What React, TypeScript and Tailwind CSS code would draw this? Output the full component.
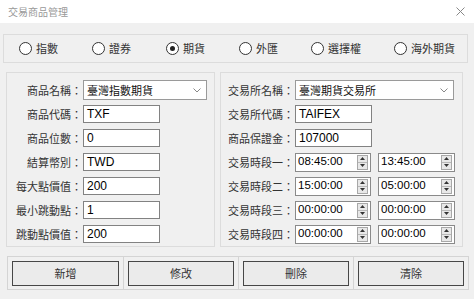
import React from 'react';

const CJK = '"Noto Sans CJK TC", "Noto Sans", sans-serif';
const LAT = '"Liberation Sans", "Noto Sans CJK TC", sans-serif';

const RADIOS = [
  { label: '指數', w: 'w-[73px]' },
  { label: '證券', w: 'w-[74px]' },
  { label: '期貨', w: 'w-[73px]', checked: true },
  { label: '外匯', w: 'w-[72px]' },
  { label: '選擇權', w: 'w-[83px]' },
  { label: '海外期貨', w: 'w-[70px]' },
];

const Radio: React.FC<{ label: string; checked?: boolean; w: string }> = ({ label, checked, w }) => (
  <div className={`flex items-center ${w}`}>
    <span className="w-[13px] h-[13px] rounded-full border border-[#333] bg-white flex items-center justify-center">
      {checked && <span className="w-[5px] h-[5px] rounded-full bg-[#222]" />}
    </span>
    <span className="ml-[4px] text-[11px] text-[#333]" style={{ fontFamily: CJK }}>
      {label}
    </span>
  </div>
);

const TextBox: React.FC<{ value: string; w: string }> = ({ value, w }) => (
  <div
    className={`${w} h-[18px] bg-white border border-[#828282] flex items-center pl-[3px] text-[12px] text-black`}
    style={{ fontFamily: LAT }}
  >
    {value}
  </div>
);

const Combo: React.FC<{ value: string; w: string }> = ({ value, w }) => (
  <div className={`${w} h-[20px] bg-white border border-[#9a9a9a] flex items-center justify-between pl-[3px] pr-[5px]`}>
    <span className="text-[11px] text-[#111]" style={{ fontFamily: CJK }}>
      {value}
    </span>
    <svg width="8" height="5" viewBox="0 0 8 5">
      <path d="M0.5 0.5 L4 4 L7.5 0.5" fill="none" stroke="#888" strokeWidth="1" />
    </svg>
  </div>
);

const Spin: React.FC<{ value: string; w: string }> = ({ value, w }) => (
  <div
    className={`${w} h-[19px] bg-white border border-[#8a8a8a] flex items-center justify-between pl-[2px] pr-[2px] text-[11.5px] text-black`}
    style={{ fontFamily: LAT }}
  >
    <span>{value}</span>
    <div className="w-[11px] h-[15px] flex flex-col border border-[#a8a8a8] bg-[#e8e8e8]">
      <div className="flex-1 flex items-center justify-center border-b border-[#b8b8b8]">
        <svg width="5" height="3" viewBox="0 0 5 3">
          <path d="M0 3 L2.5 0 L5 3 Z" fill="#333" />
        </svg>
      </div>
      <div className="flex-1 flex items-center justify-center">
        <svg width="5" height="3" viewBox="0 0 5 3">
          <path d="M0 0 L2.5 3 L5 0 Z" fill="#333" />
        </svg>
      </div>
    </div>
  </div>
);

const Row: React.FC<{ label: string; lw: string; children: React.ReactNode }> = ({ label, lw, children }) => (
  <div className="h-[24px] flex items-center">
    <span className={`${lw} text-right text-[11px] text-[#333] pr-[1px]`} style={{ fontFamily: CJK }}>
      {label}
    </span>
    <div className="flex items-center gap-[7px]">{children}</div>
  </div>
);

export default function App() {
  return (
    <div className="w-[474px] h-[299px] bg-[#f0f0f0] overflow-hidden relative" style={{ fontFamily: CJK }}>
      {/* 標題列 */}
      <div className="h-[23px] bg-white flex items-center justify-between pl-[8px] pr-[9px]">
        <span className="text-[10px] text-[#999]">交易商品管理</span>
        <svg width="9" height="9" viewBox="0 0 9 9">
          <path d="M0.5 0.5 L8.5 8.5 M8.5 0.5 L0.5 8.5" stroke="#888" strokeWidth="1" />
        </svg>
      </div>

      {/* 商品類別 */}
      <div className="mt-[11px] ml-[3px] w-[465px] h-[29px] border border-[#dcdcdc] flex items-center pl-[15px]">
        {RADIOS.map(r => (
          <Radio key={r.label} {...r} />
        ))}
      </div>

      {/* 商品資料 / 交易所資料 */}
      <div className="mt-[9px] ml-[6px] flex gap-[5px]">
        <div className="w-[209px] h-[175px] border border-[#dcdcdc] pt-[5px]">
          <Row label="商品名稱：" lw="w-[76px]">
            <Combo value="臺灣指數期貨" w="w-[124px]" />
          </Row>
          <Row label="商品代碼：" lw="w-[76px]">
            <TextBox value="TXF" w="w-[77px]" />
          </Row>
          <Row label="商品位數：" lw="w-[76px]">
            <TextBox value="0" w="w-[77px]" />
          </Row>
          <Row label="結算幣別：" lw="w-[76px]">
            <TextBox value="TWD" w="w-[77px]" />
          </Row>
          <Row label="每大點價值：" lw="w-[76px]">
            <TextBox value="200" w="w-[77px]" />
          </Row>
          <Row label="最小跳動點：" lw="w-[76px]">
            <TextBox value="1" w="w-[77px]" />
          </Row>
          <Row label="跳動點價值：" lw="w-[76px]">
            <TextBox value="200" w="w-[77px]" />
          </Row>
        </div>

        <div className="w-[243px] h-[175px] border border-[#dcdcdc] pt-[5px]">
          <Row label="交易所名稱：" lw="w-[74px]">
            <Combo value="臺灣期貨交易所" w="w-[159px]" />
          </Row>
          <Row label="交易所代碼：" lw="w-[74px]">
            <TextBox value="TAIFEX" w="w-[77px]" />
          </Row>
          <Row label="商品保證金：" lw="w-[74px]">
            <TextBox value="107000" w="w-[77px]" />
          </Row>
          <Row label="交易時段一：" lw="w-[74px]">
            <Spin value="08:45:00" w="w-[76px]" />
            <Spin value="13:45:00" w="w-[77px]" />
          </Row>
          <Row label="交易時段二：" lw="w-[74px]">
            <Spin value="15:00:00" w="w-[76px]" />
            <Spin value="05:00:00" w="w-[77px]" />
          </Row>
          <Row label="交易時段三：" lw="w-[74px]">
            <Spin value="00:00:00" w="w-[76px]" />
            <Spin value="00:00:00" w="w-[77px]" />
          </Row>
          <Row label="交易時段四：" lw="w-[74px]">
            <Spin value="00:00:00" w="w-[76px]" />
            <Spin value="00:00:00" w="w-[77px]" />
          </Row>
        </div>
      </div>

      {/* 操作按鈕 */}
      <div className="mt-[9px] ml-[7px] w-[462px] h-[34px] grid grid-cols-4 border border-[#d4d4d4]">
        {['新增', '修改', '刪除', '清除'].map((t, i) => (
          <div key={t} className={`flex items-center justify-center px-[4px] ${i > 0 ? 'border-l border-[#d4d4d4]' : ''}`}>
            <div className="w-full h-[25px] border-[1.5px] border-[#474747] bg-[#ebebeb] flex items-center justify-center text-[11px] text-[#333]">
              {t}
            </div>
          </div>
        ))}
      </div>
    </div>
  );
}
